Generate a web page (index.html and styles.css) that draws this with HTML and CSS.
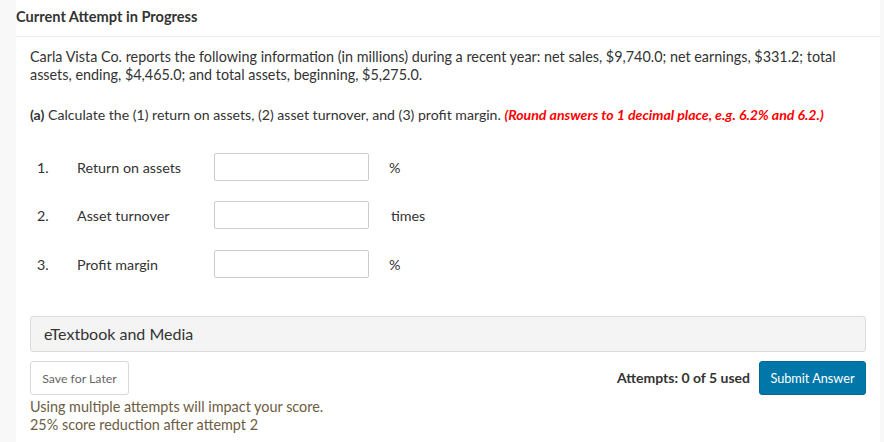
FILE: index.html
```html
<!DOCTYPE html>
<html>
<head>
<meta charset="utf-8">
<link rel="stylesheet" href="styles.css">
</head>
<body>
<div class="page">
  <div class="gutter-left"></div>
  <main class="content">
    <header class="head">Current Attempt in Progress</header>
    <section class="question">
      <p class="intro">Carla Vista Co. reports the following information (in millions) during a recent year: net sales, $9,740.0; net earnings, $331.2; total assets, ending, $4,465.0; and total assets, beginning, $5,275.0.</p>
      <p class="task"><span class="part">(a)</span> Calculate the (1) return on assets, (2) asset turnover, and (3) profit margin. <em class="hint">(Round answers to 1 decimal place, e.g. 6.2% and 6.2.)</em></p>
      <ol class="rows">
        <li class="row"><span class="num">1.</span><span class="label">Return on assets</span><span class="field"></span><span class="unit">%</span></li>
        <li class="row"><span class="num">2.</span><span class="label">Asset turnover</span><span class="field"></span><span class="unit">times</span></li>
        <li class="row"><span class="num">3.</span><span class="label">Profit margin</span><span class="field"></span><span class="unit">%</span></li>
      </ol>
      <div class="media">eTextbook and Media</div>
      <div class="actions">
        <button class="btn save">Save for Later</button>
        <div class="right">
          <span class="attempts">Attempts: 0 of 5 used</span>
          <button class="btn submit">Submit Answer</button>
        </div>
      </div>
      <p class="note">Using multiple attempts will impact your score.<br>25% score reduction after attempt 2</p>
    </section>
  </main>
  <div class="gutter-right"></div>
</div>
</body>
</html>
```
FILE: styles.css
```css
html, body {
  margin: 0;
  padding: 0;
  background: #ffffff;
}
body {
  font-family: Lato, "Open Sans", sans-serif;
  color: #333333;
  font-size: 14px;
}
.page {
  display: flex;
  width: 884px;
  height: 442px;
  overflow: hidden;
}
.gutter-left {
  width: 16px;
  flex: none;
  background: #f8f8f8;
}
.gutter-right {
  width: 4px;
  flex: none;
  background: #f8f8f8;
}
.content {
  flex: 1;
  background: #fff;
}
.head {
  height: 36px;
  border-bottom: 1px solid #ececec;
  font-weight: bold;
  font-size: 14.6px;
  line-height: 34px;
  color: #333;
}
.question {
  padding: 11px 14px 0 14px;
}
.intro {
  margin: 0;
  line-height: 18px;
  font-size: 14.36px;
}
.task {
  margin: 22px 0 0 0;
  line-height: 18px;
  font-size: 14.12px;
}
.part {
  font-weight: bold;
}
.hint {
  color: #ff0000;
  font-weight: bold;
}
.rows {
  list-style: none;
  margin: 29px 0 0 0;
  padding: 0;
  display: flex;
  flex-direction: column;
  gap: 20px;
  font-size: 14.3px;
}
.row {
  display: flex;
  align-items: center;
  height: 28px;
}
.row:nth-child(3) {
  margin-top: 1px;
}
.num {
  width: 47px;
  padding-left: 7px;
  box-sizing: border-box;
  flex: none;
}
.label {
  width: 137px;
  flex: none;
}
.field {
  width: 155px;
  height: 28px;
  box-sizing: border-box;
  border: 1px solid #cccccc;
  border-radius: 2px;
  flex: none;
}
.unit {
  margin-left: 20px;
}
.row:nth-child(2) .unit {
  margin-left: 22px;
}
.media {
  margin-top: 38px;
  height: 36px;
  box-sizing: border-box;
  border: 1px solid #dcdcdc;
  border-radius: 3px;
  background: #f4f4f4;
  font-size: 16px;
  line-height: 34px;
  padding-left: 13px;
  color: #333;
}
.actions {
  margin-top: 9px;
  display: flex;
  justify-content: space-between;
  align-items: center;
}
.right {
  display: flex;
  align-items: center;
  gap: 9px;
}
.btn {
  font-family: Lato, "Open Sans", sans-serif;
  height: 34px;
  border-radius: 3px;
  cursor: pointer;
  padding: 0;
}
.save {
  font-size: 12.3px;
  background: #fff;
  border: 1px solid #d9d9d9;
  color: #666;
  width: 99px;
}
.submit {
  font-size: 12.7px;
  background: #0077a8;
  border: 1px solid #006b98;
  color: #fff;
  width: 107px;
}
.attempts {
  font-weight: bold;
  font-size: 14px;
  color: #333;
  position: relative;
  top: -1px;
}
.note {
  margin: 3px 0 0 0;
  line-height: 18px;
  font-size: 14.4px;
  color: #6e5d42;
}
```
